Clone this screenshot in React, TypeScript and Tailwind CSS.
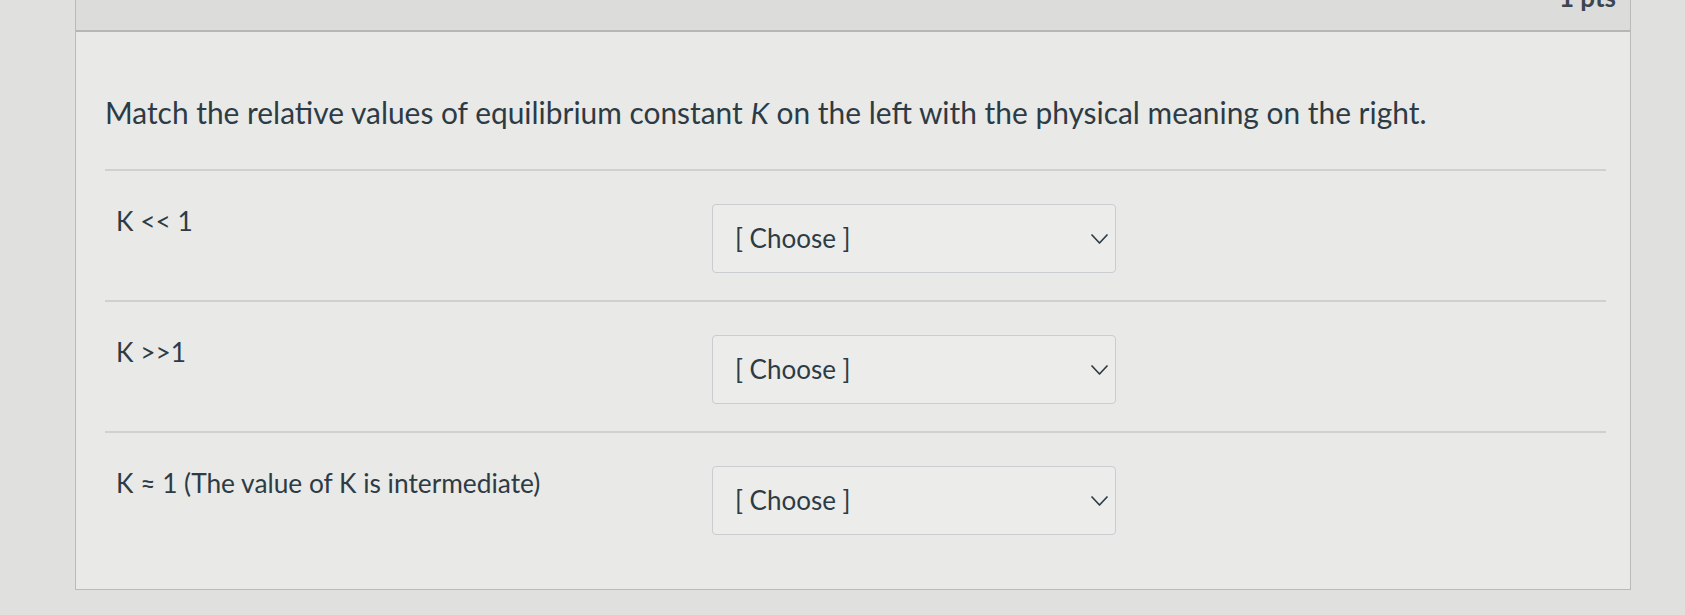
const rows = [
  { label: "K << 1" },
  { label: "K >>1" },
  { label: "K ≈ 1 (The value of K is intermediate)" },
];

function ChooseBox() {
  return (
    <div className="flex h-[69px] w-[404px] items-center justify-between rounded-[4px] border border-[#c9cdcf] bg-[#ecedeb] pl-[22px] pr-[7px]">
      <span className="text-[26px] text-[#2d3b45]">[ Choose ]</span>
      <svg width="17" height="10" viewBox="0 0 17 10" fill="none" className="text-[#2d3b45]">
        <polyline points="1,1 8.5,9 16,1" stroke="currentColor" strokeWidth="1.7" strokeLinecap="round" strokeLinejoin="round" />
      </svg>
    </div>
  );
}

export default function App() {
  return (
    <div
      className="flex h-[615px] w-[1685px] overflow-hidden bg-[#e0e0de]"
      style={{ fontFamily: "Lato, 'Open Sans', sans-serif" }}
    >
      <div className="w-[75px] shrink-0" />
      <div className="flex w-[1556px] shrink-0 flex-col self-start border-x border-b border-[#b9bbbb] bg-[#e9e9e7]">
        <div className="flex h-[32px] justify-end border-b-2 border-[#b5b7b7] bg-[#dcdcda] pr-[14px]">
          <span className="-mt-[22px] text-[26px] font-bold text-[#3b4650]">1 pts</span>
        </div>
        <div className="pl-[29px] pr-[24px]">
          <p className="pt-[62px] pb-[39px] text-[29.9px] leading-[36px] text-[#2d3b45]">
            Match the relative values of equilibrium constant <i>K</i> on the left with the physical meaning on the right.
          </p>
          {rows.map((r, i) => (
            <div key={i} className="border-t-2 border-[#cfd1d1]">
              <div className="grid grid-cols-[607px_404px] pt-[33px] pb-[27px]">
                <div className="pl-[11px] pt-[1px] text-[26.3px] leading-[32px] text-[#2d3b45]">{r.label}</div>
                <ChooseBox />
              </div>
            </div>
          ))}
          <div className="h-[27px]" />
        </div>
      </div>
    </div>
  );
}
